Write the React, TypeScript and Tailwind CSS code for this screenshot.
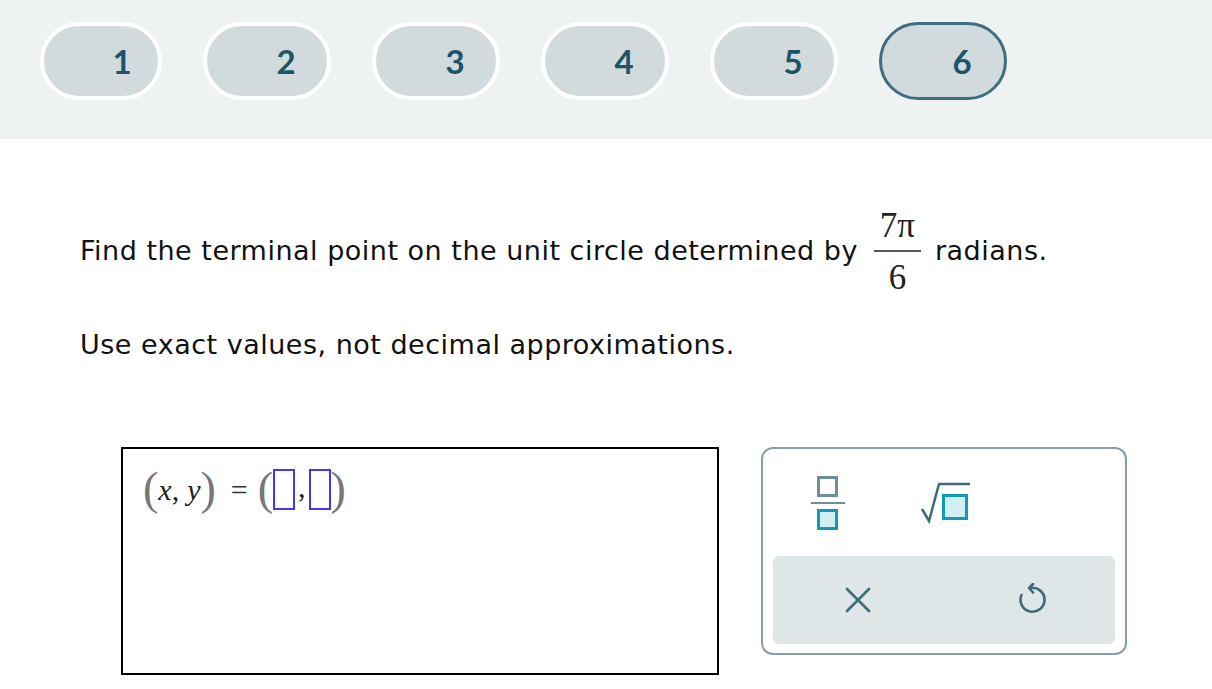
import React from 'react';

const pills = ['1', '2', '3', '4', '5', '6'];

function FracIcon() {
  return (
    <svg width="40" height="58" viewBox="0 0 40 58" fill="none">
      <rect x="8.5" y="2.5" width="18" height="18" stroke="#6e8f99" strokeWidth="3" />
      <line x1="1" y1="28" x2="35" y2="28" stroke="#6e8f99" strokeWidth="2" />
      <rect x="8.5" y="35.5" width="18" height="18" fill="#d2eef3" stroke="#0f9bb3" strokeWidth="3" />
    </svg>
  );
}

function SqrtIcon() {
  return (
    <svg width="52" height="44" viewBox="0 0 52 44" fill="none">
      <path d="M2 27 L9 39 L19 2 H50" stroke="#3d6b7a" strokeWidth="2.5" strokeLinejoin="miter" />
      <rect x="23.5" y="13.5" width="23" height="23" fill="#d2eef3" stroke="#0f9bb3" strokeWidth="3" />
    </svg>
  );
}

function CloseIcon() {
  return (
    <svg width="26" height="26" viewBox="0 0 26 26" fill="none">
      <path d="M2 2 L24 24 M24 2 L2 24" stroke="#3f6a78" strokeWidth="2.6" strokeLinecap="round" />
    </svg>
  );
}

function UndoIcon() {
  return (
    <svg width="30" height="36" viewBox="0 0 30 36" fill="none">
      <path d="M12 5 A12 12 0 1 1 3.5 12" stroke="#3f6a78" strokeWidth="2.6" strokeLinecap="round" />
      <path d="M15 1 L11 5 L15 9.5" stroke="#3f6a78" strokeWidth="2.6" strokeLinecap="round" strokeLinejoin="round" />
    </svg>
  );
}

export default function App() {
  return (
    <div className="w-[1212px] h-[689px] bg-white overflow-hidden">
      {/* Question navigator */}
      <div className="h-[139px] bg-[#eef2f3] pt-[22px] pl-[40px] flex gap-[41px]">
        {pills.map((n, i) => (
          <div
            key={n}
            className={
              'h-[78px] rounded-full bg-[#d1dbde] flex items-center justify-center ' +
              (i === 0 ? 'w-[122px] pl-[42px] ' : 'w-[128px] pl-[38px] ') +
              (i === 5 ? 'border-[3px] border-[#3f6e7e]' : 'border-[4px] border-white')
            }
          >
            <span className="font-['Lato',sans-serif] font-bold text-[33px] text-[#1d5466] leading-none">{n}</span>
          </div>
        ))}
      </div>

      {/* Question */}
      <div className="pl-[80px] pt-[64px] font-['DejaVu_Sans',Verdana,sans-serif] text-[27px] tracking-[0.5px] text-[#111]">
        <div className="flex items-center h-[96px]">
          <span>Find the terminal point on the unit circle determined by</span>
          <span className="ml-[16px] mr-[14px] inline-flex flex-col items-center font-['Liberation_Serif',serif] text-[35px] tracking-normal leading-none text-[#222]">
            <span className="px-[4px] pb-[7px]">7π</span>
            <span className="w-[47px] h-[2px] bg-[#555]" />
            <span className="pt-[8px]">6</span>
          </span>
          <span>radians.</span>
        </div>
        <div className="mt-[30px] leading-[32px]">Use exact values, not decimal approximations.</div>
      </div>

      {/* Answer area */}
      <div className="pl-[121px] mt-[86px] flex items-start gap-[42px]">
        <div className="w-[598px] h-[228px] border-2 border-black pt-[14px] pl-[20px]">
          <div className="flex items-center font-['Liberation_Serif',serif] text-[30px] text-[#222] h-[52px]">
            <span className="text-[#777] text-[46px] font-light leading-none">(</span>
            <span className="italic">x</span>
            <span className="mr-[8px]">,</span>
            <span className="italic">y</span>
            <span className="text-[#777] text-[46px] font-light leading-none">)</span>
            <span className="ml-[15px] mr-[10px] text-[#333]">=</span>
            <span className="text-[#777] text-[46px] font-light leading-none">(</span>
            <span className="w-[22px] h-[41px] border-2 border-[#3b3bf5]" />
            <span className="self-end pb-[6px] px-[3px]">,</span>
            <span className="w-[22px] h-[41px] border-2 border-[#3b3bf5]" />
            <span className="text-[#777] text-[46px] font-light leading-none">)</span>
          </div>
        </div>

        <div className="w-[366px] h-[208px] border-2 border-[#85a0a8] rounded-[12px] px-[10px] pt-[12px] flex flex-col">
          <div className="flex items-center h-[86px]">
            <div className="w-[108px] flex justify-center pl-[6px]">
              <FracIcon />
            </div>
            <div className="w-[130px] flex justify-center">
              <SqrtIcon />
            </div>
          </div>
          <div className="mt-[9px] h-[88px] rounded-[6px] bg-[#dfe6e8] flex items-center">
            <div className="w-[166px] flex justify-center pl-[4px]">
              <CloseIcon />
            </div>
            <div className="w-[174px] flex justify-center pl-[14px] pt-[2px]">
              <UndoIcon />
            </div>
          </div>
        </div>
      </div>
    </div>
  );
}
